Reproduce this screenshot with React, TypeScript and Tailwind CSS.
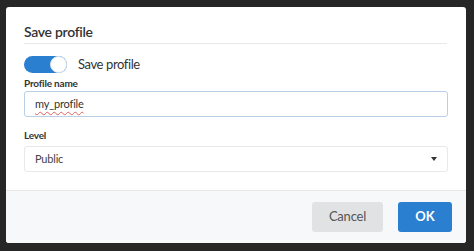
export default function App() {
  return (
    <div className="h-[251px] w-[474px] overflow-hidden bg-[#262626] pl-[6px] pt-[7px] font-['Lato','Liberation_Sans',sans-serif]">
      <div className="flex h-[236px] w-[460px] flex-col overflow-hidden rounded-[3px] bg-white">
        {/* Body */}
        <div className="flex-1 px-[18px] pt-[15px]">
          <div className="mr-[1px] border-b border-[#e6e8ea] pb-[1px] text-[14px] font-semibold leading-[20px] tracking-[-0.3px] text-[#333]">
            Save profile
          </div>

          <div className="mt-[12px] flex h-[17px] items-center gap-[11px]">
            <div className="relative h-[17px] w-[43px] rounded-full bg-[#2b7fd1]">
              <div className="absolute right-0 top-0 h-[17px] w-[17px] rounded-full border border-[#dfe3e8] bg-white" />
            </div>
            <span className="text-[13px] leading-[17px] tracking-[-0.4px] text-[#333]">Save profile</span>
          </div>

          <div className="mt-[3px] text-[10px] font-bold leading-[14px] tracking-[-0.2px] text-[#333]">Profile name</div>
          <div className="mt-[1px] flex h-[26px] items-center rounded-[3px] border border-[#b8cfe6] px-[10px]">
            <span className="text-[11px] tracking-[-0.2px] text-[#333] underline decoration-[#e06060] decoration-wavy decoration-1 underline-offset-[3px]">
              my_profile
            </span>
          </div>

          <div className="mt-[11px] text-[10px] font-bold leading-[14px] tracking-[-0.2px] text-[#333]">Level</div>
          <div className="mt-[4px] flex h-[26px] items-center justify-between rounded-[3px] border border-[#e6e8ea] pl-[10px] pr-[10px]">
            <span className="text-[11px] tracking-[-0.2px] text-[#444]">Public</span>
            <svg width="6" height="4" viewBox="0 0 6 4">
              <path d="M0 0 L6 0 L3 4 Z" fill="#333" />
            </svg>
          </div>
        </div>

        {/* Footer */}
        <div className="flex h-[53px] items-center justify-end gap-[15px] border-t border-[#e6e8ea] bg-[#f7f8fa] pr-[14px]">
          <button className="h-[30px] w-[71px] rounded-[3px] bg-[#e1e2e4] text-[13px] tracking-[-0.2px] text-[#555]">Cancel</button>
          <button className="h-[30px] w-[54px] rounded-[3px] bg-[#2a7fd1] text-[13px] font-bold text-white">OK</button>
        </div>
      </div>
    </div>
  );
}
